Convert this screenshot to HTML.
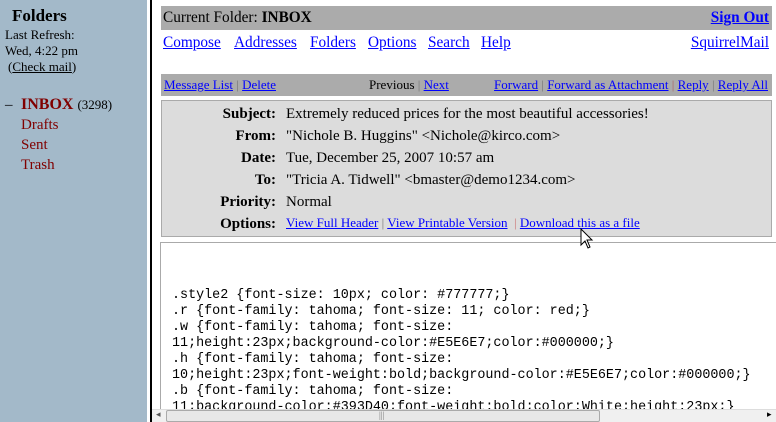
<!DOCTYPE html>
<html><head><meta charset="utf-8"><style>
*{margin:0;padding:0;box-sizing:border-box}
body{width:776px;height:422px;overflow:hidden;background:#fff;font-family:"Liberation Serif",serif;position:relative;color:#000}
.abs{position:absolute;white-space:nowrap}
a{color:#00f;text-decoration:underline}
#side{position:absolute;left:0;top:0;width:147px;height:422px;background:#a3b9c9}
#line{position:absolute;left:150px;top:0;width:2px;height:422px;background:#000}
.fold{color:#800000;font-size:15px}
.mono{font-family:"Liberation Mono",monospace;font-size:13.4px;color:#000}
.nav{top:34px;font-size:15.3px}
</style></head><body>
<div id="side">
<div class="abs" style="left:12px;top:6px;font-size:17px;font-weight:bold">Folders</div>
<div class="abs" style="left:5px;top:27px;font-size:13px">Last Refresh:</div>
<div class="abs" style="left:5px;top:43px;font-size:13px">Wed, 4:22 pm</div>
<div class="abs" style="left:8px;top:59px;font-size:13px">(<span style="text-decoration:underline">Check mail</span>)</div>
<div class="abs" style="left:5px;top:97px;font-size:15px">–</div>
<div class="abs fold" style="left:21px;top:96px;font-size:16px"><b>INBOX</b> <span style="color:#000;font-size:13px">(3298)</span></div>
<div class="abs fold" style="left:21px;top:117px">Drafts</div>
<div class="abs fold" style="left:21px;top:137px">Sent</div>
<div class="abs fold" style="left:21px;top:157px">Trash</div>
</div>
<div id="line"></div>
<div class="abs" style="left:161px;top:6px;width:611px;height:24px;background:#ababab"></div>
<div class="abs" style="left:163px;top:9px;font-size:15.3px">Current Folder: <b>INBOX</b></div>
<div class="abs" style="right:7px;top:9px;font-size:15.3px;font-weight:bold"><a>Sign Out</a></div>
<a class="abs nav" style="left:163px">Compose</a>
<a class="abs nav" style="left:234px">Addresses</a>
<a class="abs nav" style="left:310px">Folders</a>
<a class="abs nav" style="left:368px">Options</a>
<a class="abs nav" style="left:428px">Search</a>
<a class="abs nav" style="left:481px">Help</a>
<div class="abs" style="right:7px;top:34px;font-size:15.3px"><a>SquirrelMail</a></div>
<div class="abs" style="left:161px;top:74px;width:611px;height:22px;background:#ababab"></div>
<div class="abs" style="left:164px;top:77px;font-size:13px"><a>Message List</a> <span style="color:#777">|</span> <a>Delete</a></div>
<div class="abs" style="left:369px;top:77px;font-size:13px">Previous <span style="color:#777">|</span> <a>Next</a></div>
<div class="abs" style="right:8px;top:77px;font-size:13px"><a>Forward</a> <span style="color:#777">|</span> <a>Forward as Attachment</a> <span style="color:#a66">|</span> <a>Reply</a> <span style="color:#777">|</span> <a>Reply All</a></div>
<div class="abs" style="left:161px;top:100px;width:611px;height:137px;background:#dcdcdc;border:1px solid #aaa"></div>
<div class="abs" style="left:160px;top:103px;width:116px;text-align:right;font-size:15px;font-weight:bold;line-height:22px">Subject:<br>From:<br>Date:<br>To:<br>Priority:<br>Options:</div>
<div class="abs" style="left:286px;top:103px;font-size:15px;line-height:22px">Extremely reduced prices for the most beautiful accessories!<br>"Nichole B. Huggins" &lt;Nichole@kirco.com&gt;<br>Tue, December 25, 2007 10:57 am<br>"Tricia A. Tidwell" &lt;bmaster@demo1234.com&gt;<br>Normal</div>
<div class="abs" style="left:286px;top:215px;font-size:13px"><a>View Full Header</a> <span style="color:#777">|</span> <a>View Printable Version</a> &nbsp;<span style="color:#c77">|</span> <a>Download this as a file</a></div>
<div class="abs" style="left:160px;top:242px;width:620px;height:170px;border-top:1px solid #aaa;border-left:1px solid #aaa"></div>
<div class="abs mono" style="left:172px;top:288px;line-height:16px">.style2 {font-size: 10px; color: #777777;}<br>.r {font-family: tahoma; font-size: 11; color: red;}<br>.w {font-family: tahoma; font-size:<br>11;height:23px;background-color:#E5E6E7;color:#000000;}<br>.h {font-family: tahoma; font-size:<br>10;height:23px;font-weight:bold;background-color:#E5E6E7;color:#000000;}<br>.b {font-family: tahoma; font-size:<br>11;background-color:#393D40;font-weight:bold;color:White;height:23px;}</div>
<div class="abs" style="left:152px;top:409px;width:624px;height:13px;background:#f0f0f0;border-top:1px solid #ddd"></div>
<div class="abs" style="left:166px;top:410px;width:434px;height:12px;background:#e8e8e8;border:1px solid #aaa;border-radius:2px"></div>
<div class="abs" style="left:156px;top:409px;font-size:9px;color:#555">◂</div>
<div class="abs" style="left:767px;top:409px;font-size:9px;color:#000">▸</div>
<div class="abs" style="left:379px;top:410px;font-size:9px;color:#777">|||</div>
<svg class="abs" style="left:580px;top:228px" width="14" height="22" viewBox="0 0 14 22"><path d="M1 1 L1 17 L5 13 L8 20 L10 19 L7 12 L12 12 Z" fill="#fff" stroke="#000" stroke-width="1"/></svg>
</body></html>
